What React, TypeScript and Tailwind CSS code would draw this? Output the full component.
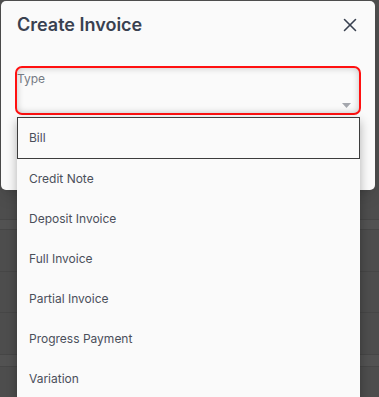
import { X } from "lucide-react";

const TYPES = [
  "Bill",
  "Credit Note",
  "Deposit Invoice",
  "Full Invoice",
  "Partial Invoice",
  "Progress Payment",
  "Variation",
];

export default function App() {
  return (
    <div
      className="relative h-[397px] w-[379px] overflow-hidden bg-[#4d4d4d]"
      style={{ fontFamily: "Inter, 'Noto Sans', sans-serif" }}
    >
      {/* page behind the overlay */}
      <div className="flex flex-col pt-[219px]">
        <div className="h-[11px] border-y border-[#464646] bg-[#525252]" />
        <div className="h-[42px] border-b border-[#464646]" />
        <div className="h-[41px] border-b border-[#464646]" />
        <div className="h-[42px] border-b border-[#464646]" />
        <div className="h-[12px] border-b border-[#464646] bg-[#525252]" />
      </div>

      {/* modal */}
      <div className="absolute left-[1px] top-[1px] h-[189px] w-[374px] rounded-[5px] bg-[#fafafa] px-4 pt-[12px] shadow-lg">
        <div className="flex items-center justify-between">
          <h2 className="text-[18px] leading-6 font-semibold text-[#394150]">Create Invoice</h2>
          <X size={22} strokeWidth={1.7} className="mr-[-2px] text-[#394150]" />
        </div>

        <div className="relative mt-[29px] h-[49px] w-[346px] -ml-[2px] rounded-[7px] border-2 border-[#ff1010] pt-[3px] shadow-[inset_0_0_7px_rgba(0,0,0,0.22)]">
          <span className="block text-[12px] leading-4 text-[#767b84]">Type</span>
          <svg width="9" height="5" viewBox="0 0 9 5" className="absolute bottom-[5px] right-[8px]">
            <path d="M0 0h9L4.5 5z" fill="#a4a7ad" />
          </svg>
        </div>
      </div>

      {/* open dropdown list */}
      <ul className="absolute left-[17px] top-[117px] w-[343px] bg-[#fafafa] shadow-[0_4px_10px_rgba(0,0,0,0.3)]">
        {TYPES.map((t, i) => (
          <li
            key={t}
            className={
              i === 0
                ? "flex h-[42px] items-center border border-[#3c3c3c] pl-[11px] text-[12px] text-[#4a4f5a]"
                : "flex h-[40px] items-center pl-[12px] text-[12px] text-[#4a4f5a]"
            }
          >
            {t}
          </li>
        ))}
      </ul>
    </div>
  );
}
